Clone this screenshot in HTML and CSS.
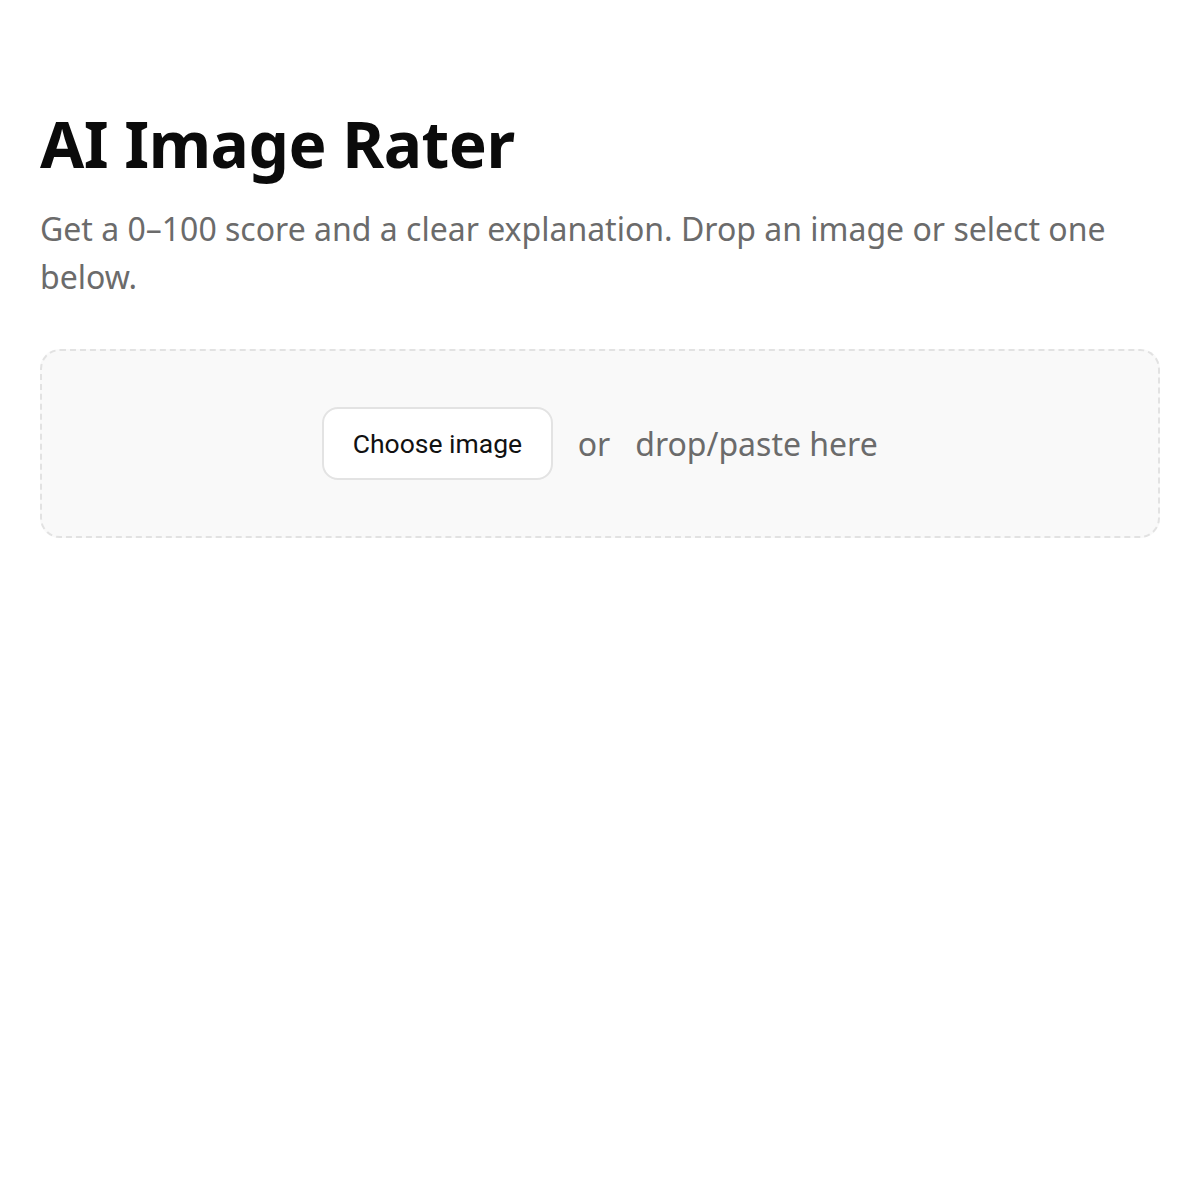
FILE: index.html
```html
<!DOCTYPE html>
<html lang="en">
<head>
<meta charset="utf-8">
<title>AI Image Rater</title>
<link rel="stylesheet" href="styles.css">
</head>
<body>
<main class="page">
  <h1 class="title">AI Image Rater</h1>
  <p class="subtitle">Get a 0–100 score and a clear explanation. Drop an image or select one below.</p>
  <section class="dropzone">
    <button class="choose-btn" type="button">Choose image</button>
    <span class="hint">or</span>
    <span class="hint">drop/paste here</span>
  </section>
</main>
</body>
</html>
```

FILE: styles.css
```css
* { box-sizing: border-box; }
html, body { margin: 0; padding: 0; background: #ffffff; }
body {
  font-family: "Noto Sans", "Open Sans", sans-serif;
  color: #111;
}
.page {
  padding: 106px 40px 40px;
}
.title {
  margin: 0;
  font-size: 64px;
  line-height: 1.2;
  font-weight: 700;
  color: #0b0b0b;
  letter-spacing: -0.5px;
}
.subtitle {
  margin: 22px 0 0;
  font-size: 32px;
  line-height: 48px;
  color: #6b6b6b;
}
.dropzone {
  margin-top: 48px;
  height: 189px;
  border: 2px dashed #e2e2e2;
  border-radius: 20px;
  background: #f9f9f9;
  display: flex;
  align-items: center;
  justify-content: center;
  gap: 25px;
}
.choose-btn {
  font-family: Roboto, "Noto Sans", sans-serif;
  font-size: 26.5px;
  color: #111;
  background: #fff;
  border: 2px solid #e3e3e3;
  border-radius: 16px;
  height: 73px;
  padding: 0 28.5px;
  cursor: pointer;
}
.hint {
  font-size: 32px;
  color: #6b6b6b;
}
```
